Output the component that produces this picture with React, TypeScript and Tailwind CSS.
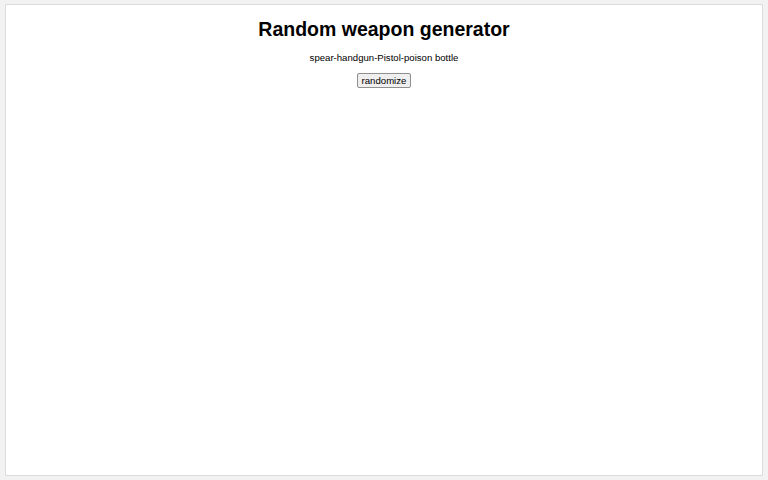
import { useState } from 'react';

const WEAPONS = ['spear', 'handgun', 'Pistol', 'poison bottle', 'sword', 'axe', 'bow', 'dagger', 'crossbow', 'mace'];

const pick = () => {
  const list: string[] = [];
  for (let i = 0; i < 4; i++) list.push(WEAPONS[Math.floor(Math.random() * WEAPONS.length)]);
  return list.join('-');
};

export default function App() {
  const [combo, setCombo] = useState('spear-handgun-Pistol-poison bottle');

  return (
    <div className="h-[480px] w-[768px] bg-[#f2f2f2] px-[5px] pt-[4px] pb-[4px] font-['Liberation_Sans',Arial,sans-serif] text-black">
      <div className="flex h-full flex-col items-center border border-[#dcdcdc] bg-white">
        <h1 className="mt-[13px] text-[19.5px] leading-[22px] font-bold">Random weapon generator</h1>
        <p className="mt-[12px] text-[9.6px] leading-[12px]">{combo}</p>
        <button
          className="mt-[9px] h-[15px] rounded-[2px] border border-[#8f8f8f] bg-[#efefef] px-[4px] text-[9.6px] leading-[12px]"
          onClick={() => setCombo(pick())}
        >
          randomize
        </button>
      </div>
    </div>
  );
}
